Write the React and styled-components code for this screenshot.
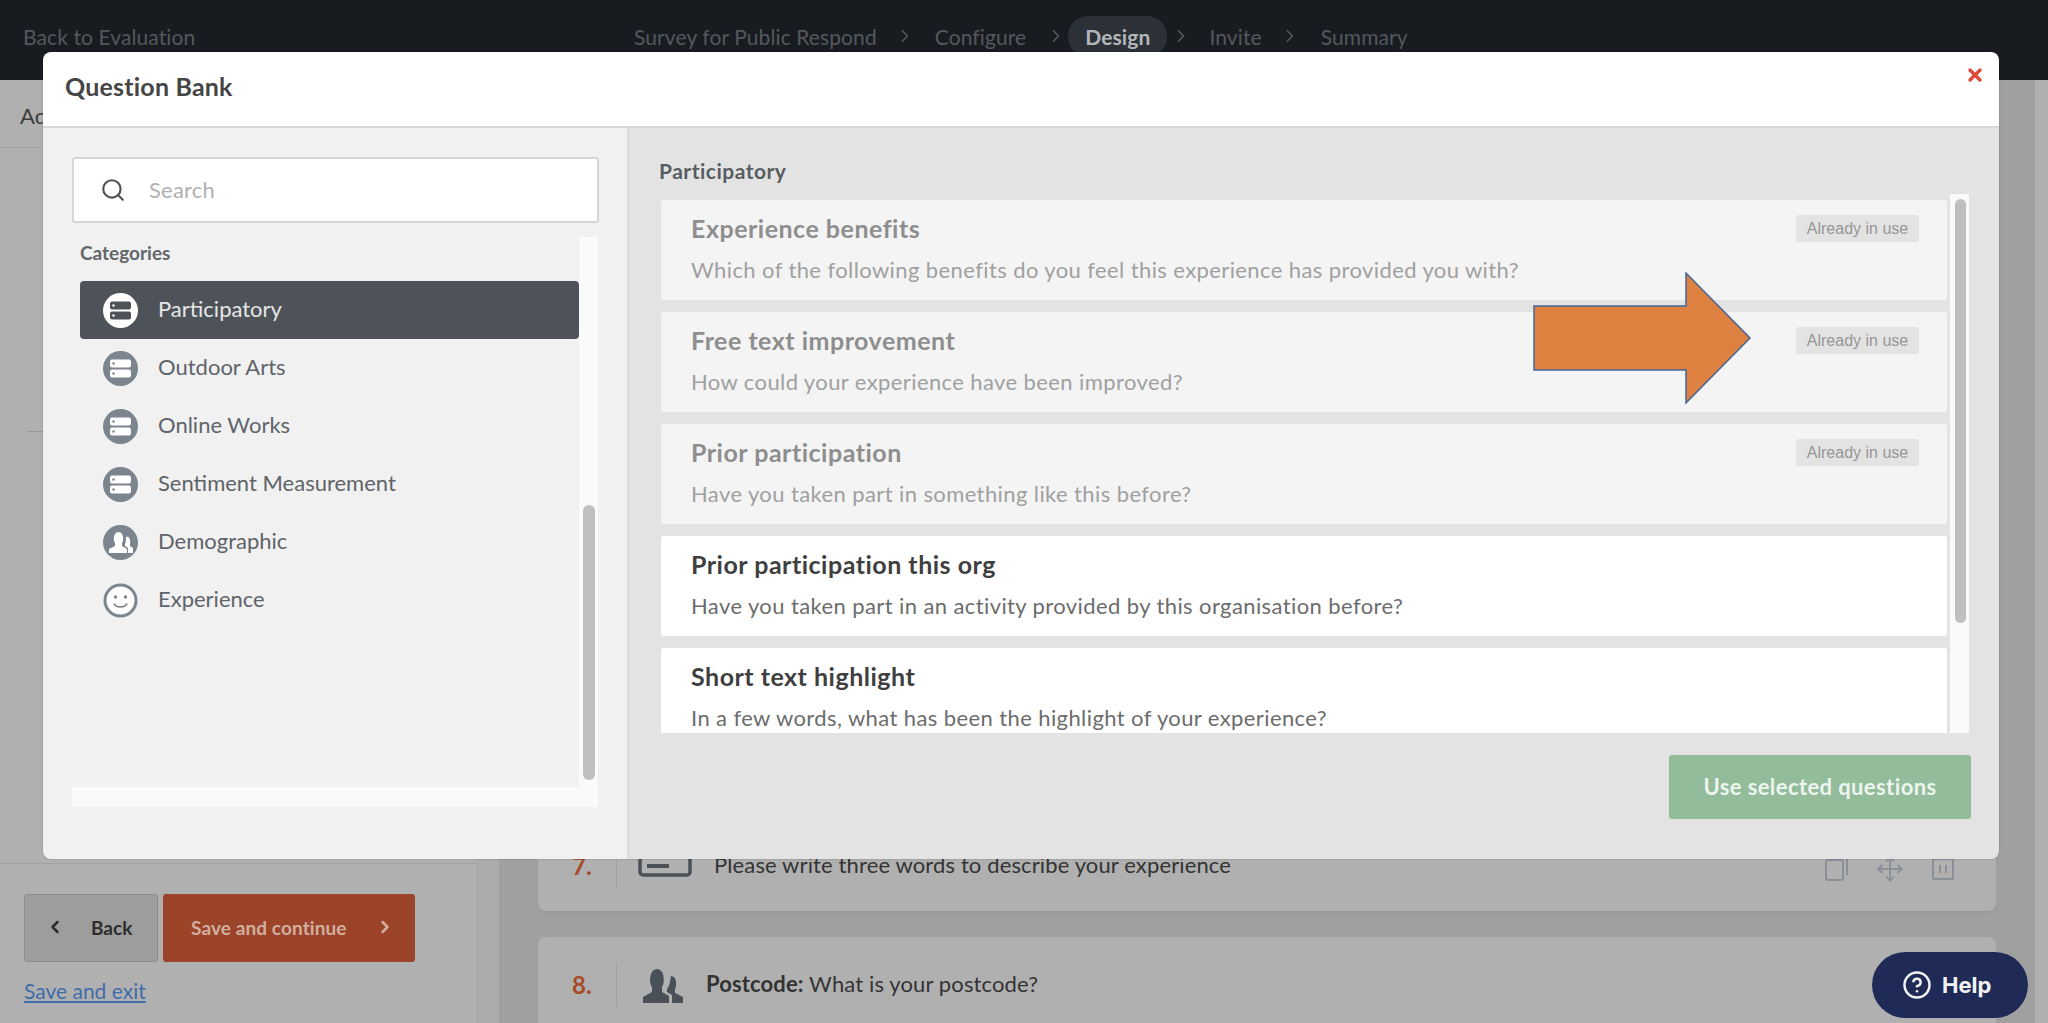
import React from 'react'
import styled, { createGlobalStyle } from 'styled-components'
import { ChevronLeft, ChevronRight, CircleHelp, Move, Search, X } from 'lucide-react'

const FONT = `Lato, "Open Sans", sans-serif`

const GlobalStyle = createGlobalStyle`
  html, body { margin: 0; padding: 0; background: #a0a0a0; }
  * { box-sizing: border-box; }
`

const Page = styled.div`
  position: relative;
  width: 2048px;
  height: 1023px;
  overflow: hidden;
  display: flex;
  flex-direction: column;
  font-family: ${FONT};
`

const TopBar = styled.header`
  flex: none;
  height: 80px;
  padding: 0 0 8px 23px;
  background: #181c21;
  display: grid;
  grid-template-columns: 611px auto;
  align-items: center;
  font-size: 21px;
  letter-spacing: 0.1px;
  color: #54585d;
`

const Crumbs = styled.nav`
  display: flex;
  align-items: center;
`

const Crumb = styled.span`
  display: block;
  padding: ${p => (p.$active ? '8px 17px' : '0')};
  border-radius: 20px;
  color: ${p => (p.$active ? '#b4b7ba' : '#54585d')};
  background: ${p => (p.$active ? '#2b3137' : 'transparent')};
  font-weight: ${p => (p.$active ? 700 : 400)};
`

const CrumbArrow = styled(ChevronRight)`
  flex: none;
  width: 20px;
  height: 20px;
  margin: 0 ${p => p.$after}px 0 ${p => p.$before}px;
  color: #54585d;
`

const Workspace = styled.div`
  flex: 1;
  min-height: 0;
  display: flex;
`

const SidePanel = styled.aside`
  flex: none;
  width: 476px;
  display: flex;
  flex-direction: column;
  background: #b0b0b0;
`

const SideHeader = styled.div`
  height: 68px;
  padding: 22px 0 0 20px;
  border-bottom: 1px solid #a3a3a3;
  font-size: 22px;
  color: #3c3c3c;
`

const SideRule = styled.div`
  width: 30px;
  height: 1px;
  margin: 283px 0 0 27px;
  background: #9a9a9a;
`

const SideFooter = styled.div`
  margin-top: auto;
  height: 160px;
  padding: 30px 24px 0;
  border-top: 1px solid #a3a3a3;
`

const FooterButtons = styled.div`
  display: flex;
  gap: 5px;
`

const BackButton = styled.button`
  width: 134px;
  height: 68px;
  padding: 0 0 2px 20px;
  display: flex;
  align-items: center;
  gap: 26px;
  background: #9d9d9d;
  border: 1px solid #8c8c8c;
  border-radius: 3px;
  font: 700 19px ${FONT};
  color: #2d2d2d;
`

const SaveButton = styled.button`
  width: 252px;
  height: 68px;
  padding: 0 20px 2px 28px;
  display: flex;
  align-items: center;
  justify-content: space-between;
  background: #9c442a;
  border: 0;
  border-radius: 3px;
  font: 700 19px ${FONT};
  letter-spacing: 0.1px;
  color: #d1ae9f;
`

const ExitLink = styled.a`
  display: block;
  margin-top: 16px;
  font-size: 21px;
  color: #3f6cab;
  text-decoration: underline;
`

const Gutter = styled.div`
  flex: none;
  width: 23px;
  background: #ababab;
`

const QuestionColumn = styled.main`
  flex: 1;
  padding-left: 39px;
  padding-right: 39px;
  display: flex;
  flex-direction: column;
  justify-content: flex-end;
  gap: 26px;
  background: #a0a0a0;
`

const PageScrollbar = styled.div`
  flex: none;
  width: 13px;
  background: #b0b0b0;
`

const QuestionCard = styled.div`
  height: ${p => p.$height}px;
  padding: ${p => p.$top}px 41px 0 34px;
  background: #b0b0b0;
  border-radius: ${p => (p.$open ? '8px 8px 0 0' : '0 0 8px 8px')};
  box-shadow: ${p => (p.$open ? 'none' : '0 2px 2px #9a9a9a')};
`

const QuestionRow = styled.div`
  height: 44px;
  display: flex;
  align-items: center;
  font-size: 22px;
  letter-spacing: 0.13px;
  color: #333;
`

const QuestionNumber = styled.span`
  width: 44px;
  margin-top: -2px;
  font-size: 24px;
  font-weight: 700;
  letter-spacing: 0;
  color: #a74a2b;
`

const QuestionRule = styled.span`
  width: 1px;
  height: 100%;
  margin-right: 21px;
  background: #a0a0a0;
`

const PeopleIcon = styled.svg`
  margin-left: 4px;
`

const QuestionText = styled.span`
  margin: -3px 0 0 22px;
  b { font-weight: 700; }
`

const QuestionTools = styled.div`
  margin-top: 6px;
  margin-left: auto;
  display: flex;
  align-items: center;
  gap: 27px;
  color: #8b9096;
`

const Modal = styled.section`
  position: absolute;
  left: 43px;
  top: 52px;
  width: 1956px;
  height: 807px;
  display: flex;
  flex-direction: column;
  border-radius: 8px;
  overflow: hidden;
  box-shadow: 0 0 2px rgba(0, 0, 0, 0.25);
`

const ModalHeader = styled.div`
  flex: none;
  height: 76px;
  padding: 0 14px 6px 22px;
  display: flex;
  align-items: center;
  justify-content: space-between;
  background: #fff;
  border-bottom: 2px solid #d8d8d8;
`

const ModalTitle = styled.h2`
  margin: 0;
  font-size: 25px;
  font-weight: 700;
  letter-spacing: 0.2px;
  color: #454545;
`

const CloseIcon = styled(X)`
  width: 20px;
  height: 20px;
  margin-top: -22px;
  color: #df4a36;
`

const ModalBody = styled.div`
  flex: 1;
  min-height: 0;
  display: flex;
`

const CategoryPane = styled.div`
  flex: none;
  width: 586px;
  padding: 29px 0 0 29px;
  background: #f1f1f1;
  border-right: 2px solid #dcdcdc;
`

const SearchBox = styled.div`
  width: 527px;
  height: 66px;
  padding-left: 26px;
  display: flex;
  align-items: center;
  gap: 23px;
  background: #fff;
  border: 2px solid #d6d6d6;
  border-radius: 3px;
  font-size: 22px;
  letter-spacing: 0.2px;
  color: #b0b0b0;
`

const SearchLabel = styled.span`
  margin-top: -2px;
`

const CategoryFrame = styled.div`
  width: 526px;
  height: 570px;
  margin-top: 14px;
  padding-bottom: 20px;
  display: flex;
  background: #fafafa;
`

const CategoryList = styled.div`
  flex: none;
  width: 507px;
  padding-left: 8px;
  background: #f1f1f1;
`

const CategoryLabel = styled.div`
  height: 44px;
  padding-top: 4px;
  font-size: 19px;
  font-weight: 700;
  color: #62676c;
`

const CategoryRow = styled.div`
  height: 58px;
  padding-left: 23px;
  display: flex;
  align-items: center;
  gap: 20px;
  border-radius: 4px;
  font-size: 22px;
  color: ${p => (p.$active ? '#e6e6e6' : '#5e6469')};
  background: ${p => (p.$active ? '#4e5359' : 'transparent')};
`

const CategoryName = styled.span`
  margin-top: -4px;
`

const ScrollTrack = styled.div`
  flex: none;
  width: ${p => p.$width}px;
  padding: ${p => p.$top}px ${p => p.$right}px 0 ${p => p.$left}px;
`

const ScrollThumb = styled.div`
  height: ${p => p.$height}px;
  border-radius: 6px;
  background: #bfbfbf;
`

const QuestionPane = styled.div`
  flex: 1;
  min-width: 0;
  padding: 30px 28px 0 30px;
  display: flex;
  flex-direction: column;
  background: #e3e3e3;
`

const PaneHeading = styled.h3`
  margin: 0;
  height: 36px;
  font-size: 21px;
  font-weight: 700;
  letter-spacing: 0.5px;
  color: #585d62;
`

const QuestionViewport = styled.div`
  height: 539px;
  display: flex;
  overflow: hidden;
`

const BankList = styled.div`
  flex: none;
  width: 1288px;
  padding: 6px 0 0 2px;
  display: flex;
  flex-direction: column;
  gap: 12px;
`

const BankCard = styled.article`
  flex: none;
  position: relative;
  height: 100px;
  padding: 13px 24px 0 30px;
  border-radius: 3px;
  background: ${p => (p.$used ? '#f4f4f4' : '#fff')};
`

const BankTitle = styled.h4`
  margin: 0;
  font-size: 25px;
  line-height: 30px;
  font-weight: 700;
  letter-spacing: 0.5px;
  color: ${p => (p.$used ? '#8e8e8e' : '#3f3f3f')};
`

const BankText = styled.p`
  margin: 12px 0 0;
  font-size: 22px;
  line-height: 30px;
  letter-spacing: 0.4px;
  color: ${p => (p.$used ? '#a0a0a0' : '#6c6c6c')};
`

const UsedBadge = styled.span`
  position: absolute;
  right: 28px;
  top: 15px;
  width: 123px;
  height: 27px;
  display: flex;
  align-items: center;
  justify-content: center;
  border-radius: 3px;
  background: #e3e3e3;
  font: 16px "Liberation Sans", sans-serif;
  color: #969696;
`

const BankTrack = styled(ScrollTrack)`
  margin-left: 3px;
  background: #fafafa;
`

const PaneFooter = styled.div`
  margin-top: 22px;
  display: flex;
  justify-content: flex-end;
`

const UseButton = styled.button`
  width: 302px;
  height: 64px;
  padding-bottom: 3px;
  border: 0;
  border-radius: 3px;
  background: #92bc9a;
  font: 700 22px ${FONT};
  letter-spacing: 0.4px;
  color: #eef4ef;
`

const CalloutArrow = styled.svg`
  position: absolute;
  left: 1532px;
  top: 271px;
`

const HelpButton = styled.button`
  position: absolute;
  left: 1872px;
  top: 952px;
  width: 156px;
  height: 66px;
  padding: 0 0 0 30px;
  display: flex;
  align-items: center;
  gap: 10px;
  border: 0;
  border-radius: 33px;
  background: #1f2a56;
  font: 700 22px Inter, sans-serif;
  color: #f2f2f2;
`

// round badge used in the category list, glyph changes by kind
function CategoryIcon({ kind, active }) {
  const ring = active ? '#fff' : '#7c858d'
  const ink = active ? '#4e5359' : '#fff'
  if (kind === 'smile') {
    return (
      <svg width="35" height="35" viewBox="0 0 35 35">
        <circle cx="17.5" cy="17.5" r="15.5" fill="#fff" stroke={ring} strokeWidth="3" />
        <circle cx="12.5" cy="14" r="1.7" fill={ring} />
        <circle cx="22.5" cy="14" r="1.7" fill={ring} />
        <path d="M11 20.5c2 4.5 11 4.500 13 0" fill="none" stroke={ring} strokeWidth="1.8" />
      </svg>
    )
  }
  if (kind === 'people') {
    return (
      <svg width="35" height="35" viewBox="0 0 35 35">
        <circle cx="17.5" cy="17.5" r="17.5" fill={ring} />
        <path d="M6 28v-4l6-3v-3c-2-2-2-11 3.500-11s5.500 9 3.500 11v3l5 3v4z" fill={ink} />
        <path d="M23 12c3-1 5 2 4 7v2l3 2v5h-5v-5l-3-2v-2c1-2 1-5 1-7z" fill={ink} />
      </svg>
    )
  }
  return (
    <svg width="35" height="35" viewBox="0 0 35 35">
      <circle cx="17.5" cy="17.5" r="17.5" fill={ring} />
      <rect x="7" y="8.500" width="21" height="8" rx="2" fill={ink} />
      <rect x="7" y="18.500" width="21" height="8" rx="2" fill={ink} />
      <circle cx="10.500" cy="12.500" r="1.200" fill={ring} />
      <circle cx="10.500" cy="22.500" r="1.200" fill={ring} />
    </svg>
  )
}

const CATEGORIES = [
  { name: 'Participatory', kind: 'server', active: true },
  { name: 'Outdoor Arts', kind: 'server' },
  { name: 'Online Works', kind: 'server' },
  { name: 'Sentiment Measurement', kind: 'server' },
  { name: 'Demographic', kind: 'people' },
  { name: 'Experience', kind: 'smile' },
]

const QUESTIONS = [
  { title: 'Experience benefits', text: 'Which of the following benefits do you feel this experience has provided you with?', used: true },
  { title: 'Free text improvement', text: 'How could your experience have been improved?', used: true },
  { title: 'Prior participation', text: 'Have you taken part in something like this before?', used: true },
  { title: 'Prior participation this org', text: 'Have you taken part in an activity provided by this organisation before?' },
  { title: 'Short text highlight', text: 'In a few words, what has been the highlight of your experience?' },
]

export default function App() {
  return (
    <Page>
      <GlobalStyle />
      <TopBar>
        <span>Back to Evaluation</span>
        <Crumbs>
          <Crumb>Survey for Public Respond</Crumb>
          <CrumbArrow $before={18} $after={20} />
          <Crumb>Configure</Crumb>
          <CrumbArrow $before={20} $after={2} />
          <Crumb $active>Design</Crumb>
          <CrumbArrow $before={4} $after={18} />
          <Crumb>Invite</Crumb>
          <CrumbArrow $before={18} $after={21} />
          <Crumb>Summary</Crumb>
        </Crumbs>
      </TopBar>

      <Workspace>
        <SidePanel>
          <SideHeader>Add</SideHeader>
          <SideRule />
          <SideFooter>
            <FooterButtons>
              <BackButton><ChevronLeft size={20} strokeWidth={3} />Back</BackButton>
              <SaveButton>Save and continue<ChevronRight size={20} strokeWidth={3} /></SaveButton>
            </FooterButtons>
            <ExitLink>Save and exit</ExitLink>
          </SideFooter>
        </SidePanel>
        <Gutter />
        <QuestionColumn>
          <QuestionCard $height={100} $top={33}>
            <QuestionRow>
              <QuestionNumber>7.</QuestionNumber>
              <QuestionRule />
              <svg width="54" height="22" viewBox="0 0 54 22">
                <rect x="2" y="2" width="50" height="18" rx="3" fill="none" stroke="#4a5057" strokeWidth="3.500" />
                <rect x="9" y="9" width="22" height="4" fill="#4a5057" />
              </svg>
              <QuestionText>Please write three words to describe your experience</QuestionText>
              <QuestionTools>
                <svg width="24" height="24" viewBox="0 0 24 24" fill="none" stroke="currentColor" strokeWidth="2">
                  <rect x="1" y="3" width="17" height="20" rx="2" />
                  <path d="M22 1v17" />
                </svg>
                <Move size={28} strokeWidth={1.600} />
                <svg width="24" height="24" viewBox="0 0 24 24" fill="none" stroke="currentColor" strokeWidth="2">
                  <rect x="2" y="2" width="20" height="20" rx="1" />
                  <path d="M9 8v8M15 8v8" />
                </svg>
              </QuestionTools>
            </QuestionRow>
          </QuestionCard>
          <QuestionCard $height={86} $top={26} $open>
            <QuestionRow>
              <QuestionNumber>8.</QuestionNumber>
              <QuestionRule />
              <PeopleIcon width="42" height="36" viewBox="0 0 42 36" fill="#4a5057">
                <path d="M1 36v-6l9-5v-5C7 17 7 2 15 2s8 15 5 18v5l7 4v7z" />
                <path d="M29 9c6 0 6 10 4 13v4l8 4v6H30v-8l-5-3v-3c3-3 3-9 4-13z" />
              </PeopleIcon>
              <QuestionText><b>Postcode:</b> What is your postcode?</QuestionText>
            </QuestionRow>
          </QuestionCard>
        </QuestionColumn>
        <PageScrollbar />
      </Workspace>

      <Modal>
        <ModalHeader>
          <ModalTitle>Question Bank</ModalTitle>
          <CloseIcon strokeWidth={4} />
        </ModalHeader>
        <ModalBody>
          <CategoryPane>
            <SearchBox>
              <Search size={26} color="#4f5459" strokeWidth={2} />
              <SearchLabel>Search</SearchLabel>
            </SearchBox>
            <CategoryFrame>
              <CategoryList>
                <CategoryLabel>Categories</CategoryLabel>
                {CATEGORIES.map(cat => (
                  <CategoryRow key={cat.name} $active={cat.active}>
                    <CategoryIcon kind={cat.kind} active={cat.active} />
                    <CategoryName>{cat.name}</CategoryName>
                  </CategoryRow>
                ))}
              </CategoryList>
              <ScrollTrack $width={19} $top={268} $left={4} $right={3}>
                <ScrollThumb $height={275} />
              </ScrollTrack>
            </CategoryFrame>
          </CategoryPane>
          <QuestionPane>
            <PaneHeading>Participatory</PaneHeading>
            <QuestionViewport>
              <BankList>
                {QUESTIONS.map(q => (
                  <BankCard key={q.title} $used={q.used}>
                    <BankTitle $used={q.used}>{q.title}</BankTitle>
                    <BankText $used={q.used}>{q.text}</BankText>
                    {q.used && <UsedBadge>Already in use</UsedBadge>}
                  </BankCard>
                ))}
              </BankList>
              <BankTrack $width={19} $top={5} $left={5} $right={3}>
                <ScrollThumb $height={424} />
              </BankTrack>
            </QuestionViewport>
            <PaneFooter>
              <UseButton>Use selected questions</UseButton>
            </PaneFooter>
          </QuestionPane>
        </ModalBody>
      </Modal>

      <CalloutArrow width="220" height="134" viewBox="0 0 220 134">
        <path d="M2 35H154V2L218 67L154 132V99H2Z" fill="#de8040" stroke="#41659a" strokeWidth="1.500" />
      </CalloutArrow>

      <HelpButton><CircleHelp size={30} strokeWidth={2} />Help</HelpButton>
    </Page>
  )
}
